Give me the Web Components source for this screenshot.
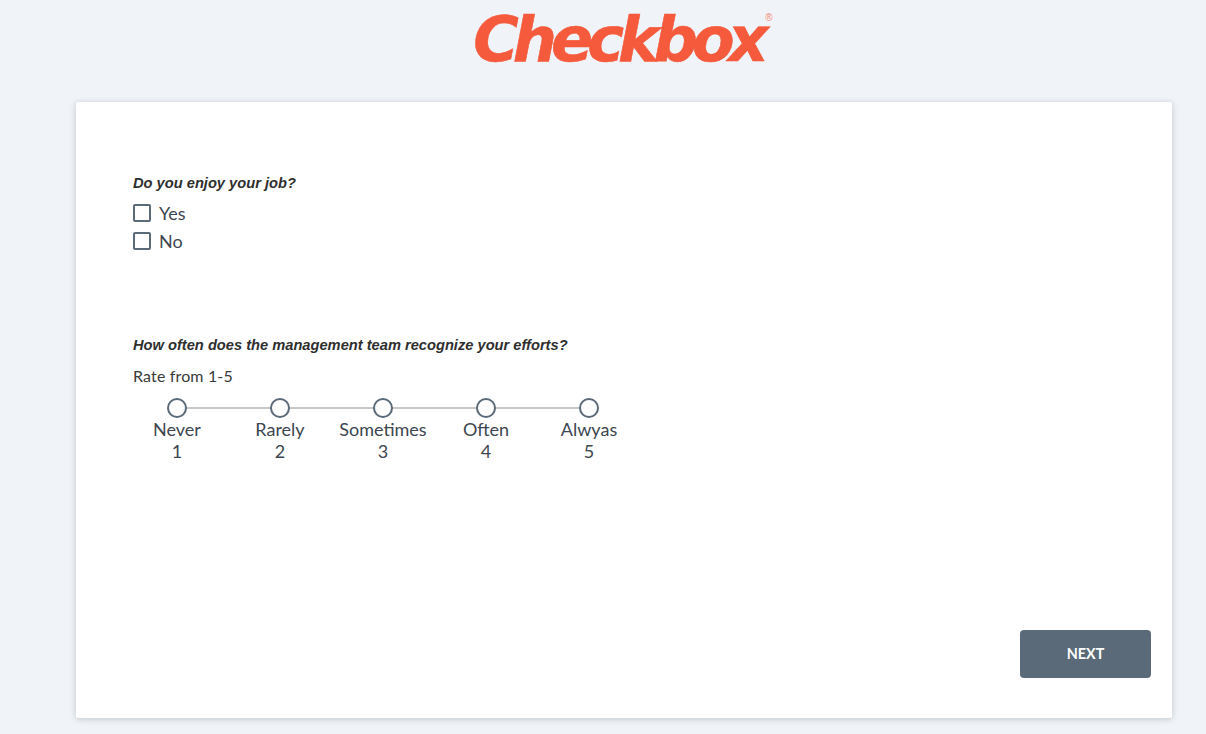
<!DOCTYPE html>
<html lang="en">
<head>
<meta charset="utf-8">
<title>Checkbox survey</title>
<style>
  html, body { margin: 0; height: 100%; }
  body { background: #f0f3f7; color: #333; font-family: "Lato", sans-serif; overflow: hidden; }
  survey-question.first { margin-top: 71px; }
  survey-question.second { margin-top: 80px; }
</style>
</head>
<body>
<survey-page>
  <survey-question class="first" heading="Do you enjoy your job?">
    <check-option>Yes</check-option>
    <check-option>No</check-option>
  </survey-question>
  <survey-question class="second" heading="How often does the management team recognize your efforts?">
    <rate-scale hint="Rate from 1-5" labels="Never,Rarely,Sometimes,Often,Alwyas"></rate-scale>
  </survey-question>
  <next-button slot="footer">NEXT</next-button>
</survey-page>

<script>
class SurveyPage extends HTMLElement {
  connectedCallback() {
    const shadow = this.attachShadow({ mode: "open" });
    shadow.innerHTML = `
      <style>
        :host { display: block; height: 734px; box-sizing: border-box; padding: 0 34px 16px 76px; }
        header { height: 102px; display: flex; justify-content: center; }
        .logo { position: relative; margin: 1px 12px 0 0; height: 78px; align-self: flex-start;
          font: italic 700 62px/78px "DejaVu Sans", sans-serif; letter-spacing: -5.9px;
          color: #f55a3c; -webkit-text-stroke: 0.6px #f55a3c; white-space: nowrap; }
        .logo sup { position: absolute; top: 12px; right: -10px; font: 400 10px/10px "Liberation Sans", sans-serif;
          letter-spacing: 0; -webkit-text-stroke: 0; color: #f58a73; }
        main { height: 616px; box-sizing: border-box; background: #fff; border-radius: 2px;
          box-shadow: 0 1px 6px rgba(70, 85, 100, .28); padding: 0 21px 40px 57px;
          display: flex; flex-direction: column; }
        .body { flex: 1; }
        .foot { display: flex; justify-content: flex-end; }
      </style>
      <header><div class="logo">Checkbox<sup>®</sup></div></header>
      <main>
        <div class="body"><slot></slot></div>
        <div class="foot"><slot name="footer"></slot></div>
      </main>`;
  }
}

class SurveyQuestion extends HTMLElement {
  connectedCallback() {
    const shadow = this.attachShadow({ mode: "open" });
    shadow.innerHTML = `
      <style>
        :host { display: block; }
        h2 { margin: 0 0 6px; font: italic 700 14.67px/20px "Liberation Sans", sans-serif; color: #2f2f2f; }
      </style>
      <h2>${this.getAttribute("heading")}</h2>
      <slot></slot>`;
  }
}

class CheckOption extends HTMLElement {
  connectedCallback() {
    const shadow = this.attachShadow({ mode: "open" });
    shadow.innerHTML = `
      <style>
        :host { display: flex; align-items: center; gap: 8px; height: 28px;
          font: 400 18px/28px "Lato", sans-serif; color: #3d4650; }
        .box { width: 14px; height: 14px; border: 2px solid #5a6a78; border-radius: 2px; }
      </style>
      <span class="box"></span><slot></slot>`;
  }
}

class RateScale extends HTMLElement {
  connectedCallback() {
    const shadow = this.attachShadow({ mode: "open" });
    const labels = this.getAttribute("labels").split(",");
    const items = labels.map((label, i) => `
      <div class="item ${i < labels.length - 1 ? "linked" : ""}">
        <span class="dot"></span>
        <span class="label">${label}</span>
        <span class="num">${i + 1}</span>
      </div>`).join("");
    shadow.innerHTML = `
      <style>
        :host { display: block; }
        p { margin: 10px 0 11px; font: 400 16px/22px "Lato", sans-serif; letter-spacing: .15px; color: #3a3a3a; }
        .scale { display: grid; grid-template-columns: repeat(5, 103px); margin-left: -7.5px; }
        .item { position: relative; display: flex; flex-direction: column; align-items: center;
          font: 400 18px/22px "Lato", sans-serif; color: #3d4650; white-space: nowrap; }
        .dot { position: relative; z-index: 1; width: 16px; height: 16px; border: 2px solid #5a6a78;
          border-radius: 50%; background: #fff; }
        .linked::after { content: ""; position: absolute; top: 9px; left: 50%; width: 103px; height: 2px; background: #c8c8c8; }
      </style>
      <p>${this.getAttribute("hint")}</p>
      <div class="scale">${items}</div>`;
  }
}

class NextButton extends HTMLElement {
  connectedCallback() {
    const shadow = this.attachShadow({ mode: "open" });
    shadow.innerHTML = `
      <style>
        :host { display: block; }
        button { display: block; width: 131px; height: 48px; border: 0; border-radius: 4px; background: #5a6a78;
          color: #fff; font: 700 14.4px "Lato", sans-serif; padding: 0 0 2px; }
      </style>
      <button><slot></slot></button>`;
  }
}

customElements.define("survey-page", SurveyPage);
customElements.define("survey-question", SurveyQuestion);
customElements.define("check-option", CheckOption);
customElements.define("rate-scale", RateScale);
customElements.define("next-button", NextButton);
</script>
</body>
</html>
